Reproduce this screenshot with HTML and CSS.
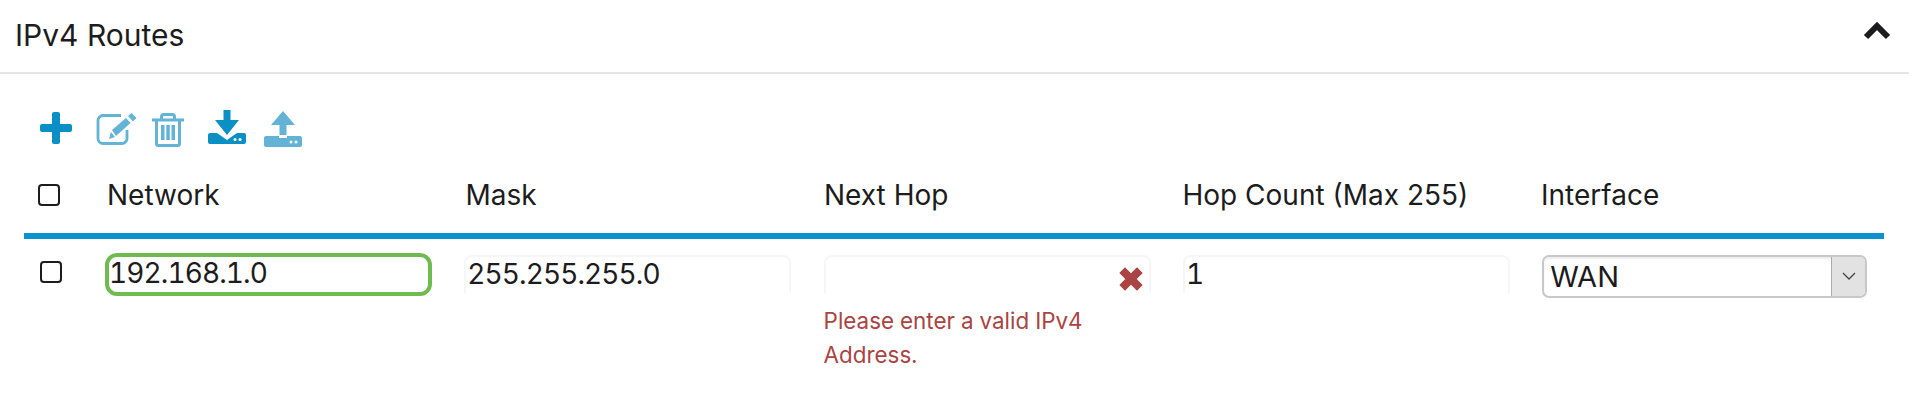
FILE: index.html
```html
<!DOCTYPE html>
<html lang="en">
<head>
    <meta charset="UTF-8">
    <meta name="viewport" content="width=device-width, initial-scale=1.0">
    <title>IPv4 Routes</title>
    <link rel="stylesheet" href="styles.css">
</head>
<body>
    <div class="panel-header">
        <h2 class="panel-title">IPv4 Routes</h2>
        <svg class="collapse-icon" width="28" height="18" viewBox="0 0 28 18">
            <path d="M3 15 L14 4 L25 15" fill="none" stroke="#1c1c1e" stroke-width="6"/>
        </svg>
    </div>

    <div class="toolbar">
        <svg class="tool-icon tool-add" width="32" height="32" viewBox="0 0 32 32">
            <path d="M12 2a2 2 0 0 1 2-2h4a2 2 0 0 1 2 2v10h10a2 2 0 0 1 2 2v4a2 2 0 0 1-2 2H20v10a2 2 0 0 1-2 2h-4a2 2 0 0 1-2-2V20H2a2 2 0 0 1-2-2v-4a2 2 0 0 1 2-2h10z" fill="#0b8fc4"/>
        </svg>
        <svg class="tool-icon tool-edit" width="41" height="32" viewBox="0 0 41 32">
            <path d="M25 2.500H7A5 5 0 0 0 2 7.500v18a5 5 0 0 0 5 5h19a5 5 0 0 0 5-5V17" fill="none" stroke="#62b3d5" stroke-width="2.800"/>
            <path d="M16 17L30 5l4.500 5L20 23z" fill="#62b3d5"/>
            <path d="M15 19l4 5-6 2z" fill="#62b3d5"/>
            <path d="M32 3l3.500-3 5 5-3.500 3.500z" fill="#62b3d5"/>
        </svg>
        <svg class="tool-icon tool-trash" width="32" height="34" viewBox="0 0 32 34">
            <path d="M0 7h32M9.500 6V4A2.500 2.500 0 0 1 12 1.500h8A2.500 2.500 0 0 1 22.500 4v2M4.500 7v23.500a2 2 0 0 0 2 2h19a2 2 0 0 0 2-2V7" fill="none" stroke="#62b3d5" stroke-width="3"/>
            <path d="M9 12h3.500v15H9zM14.300 12h3.500v15h-3.500zM19.500 12H23v15h-3.500z" fill="#62b3d5"/>
        </svg>
        <svg class="tool-icon tool-down" width="38" height="34" viewBox="0 0 38 34">
            <path d="M15.500 0h7v10H31L19 25 7 10h8.500z" fill="#0b8fc4"/>
            <path d="M2 23h7l10 7 10-7h7a2 2 0 0 1 2 2v7a2 2 0 0 1-2 2H2a2 2 0 0 1-2-2v-7a2 2 0 0 1 2-2z" fill="#0b8fc4"/>
            <circle cx="27" cy="29.500" r="1.500" fill="#fff"/>
            <circle cx="32" cy="29.500" r="1.500" fill="#fff"/>
        </svg>
        <svg class="tool-icon tool-up" width="38" height="36" viewBox="0 0 38 36">
            <path d="M19 0l12 14h-8.500v10h-7V14H7z" fill="#62b3d5"/>
            <path d="M2 25h13v2h8v-2h13a2 2 0 0 1 2 2v7a2 2 0 0 1-2 2H2a2 2 0 0 1-2-2v-7a2 2 0 0 1 2-2z" fill="#62b3d5"/>
            <circle cx="27" cy="31" r="1.500" fill="#fff"/>
            <circle cx="32" cy="31" r="1.500" fill="#fff"/>
        </svg>
    </div>

    <div class="route-grid route-head">
        <span class="check-box"></span>
        <div>Network</div>
        <div>Mask</div>
        <div>Next Hop</div>
        <div>Hop Count (Max 255)</div>
        <div>Interface</div>
    </div>

    <div class="route-grid route-row">
        <span class="check-box"></span>
        <div class="cell"><div class="field field-active">192.168.1.0</div></div>
        <div class="cell"><div class="field">255.255.255.0</div></div>
        <div class="cell">
            <div class="field">
                <svg class="error-icon" width="24" height="24" viewBox="2 2 20 20">
                    <path d="M3 7l4-4 5 5 5-5 4 4-5 5 5 5-4 4-5-5-5 5-4-4 5-5z" fill="#a94442" stroke="#a94442" stroke-width="1"/>
                </svg>
            </div>
            <div class="error-text">Please enter a valid IPv4 Address.</div>
        </div>
        <div class="cell"><div class="field">1</div></div>
        <div class="cell">
            <div class="select-box">
                <span class="select-value">WAN</span>
                <span class="select-arrow">
                    <svg width="14" height="9" viewBox="0 0 14 9"><path d="M1 1l6 6 6-6" fill="none" stroke="#444" stroke-width="1.300"/></svg>
                </span>
            </div>
        </div>
    </div>
</body>
</html>
```
FILE: styles.css
```css
body {
    margin: 0;
    height: 406px;
    overflow: hidden;
    font-family: Inter, "Liberation Sans", sans-serif;
    background-color: #FFFFFF;
    color: #1c1c20;
}

.panel-header {
    display: flex;
    justify-content: space-between;
    align-items: center;
    height: 72px;
    padding: 0 18px 0 15px;
    border-bottom: 2px solid #e6e6e6;
}

.panel-title {
    margin: 0 0 3px;
    font-size: 30px;
    font-weight: normal;
}

.collapse-icon {
    margin-bottom: 11px;
}

.toolbar {
    display: flex;
    align-items: flex-start;
    height: 37px;
    margin-top: 36px;
    padding-left: 40px;
}

.tool-add {
    margin-top: 2px;
}

.tool-edit {
    margin-top: 3px;
    margin-left: 24px;
}

.tool-trash {
    margin-top: 3px;
    margin-left: 15px;
}

.tool-down {
    margin-left: 24px;
}

.tool-up {
    margin-top: 1px;
    margin-left: 18px;
}

.route-grid {
    display: grid;
    margin-left: 24px;
    width: 1860px;
    box-sizing: border-box;
}

.route-head {
    grid-template-columns: 69px repeat(5, 358.500px);
    align-items: center;
    height: 44px;
    margin-top: 26px;
    padding: 0 0 16px 14px;
    border-bottom: 6px solid #0b93cf;
    font-size: 28px;
    box-sizing: content-box;
    width: 1846px;
}

.check-box {
    display: block;
    width: 18px;
    height: 18px;
    border: 2px solid #1c1c20;
    border-radius: 4px;
}

.route-row {
    grid-template-columns: 65px repeat(5, 359.300px);
    margin-top: 14px;
    padding-left: 16px;
    font-size: 28px;
    font-variant-numeric: tabular-nums;
}

.route-row .check-box {
    margin-top: 8px;
}

.cell {
    width: 327px;
}

.field {
    position: relative;
    box-sizing: border-box;
    height: 38px;
    margin-top: 2px;
    padding: 2px 1px 0;
    line-height: 30px;
    letter-spacing: -0.900px;
    border: 2px solid #f6f6f6;
    border-bottom: none;
    border-radius: 8px 8px 0 0;
}

.field-active {
    height: 43px;
    margin-top: 0;
    padding: 1px 0 0;
    border: 4px solid #70bb50;
    border-radius: 12px;
}

.error-icon {
    position: absolute;
    right: 6px;
    top: 10px;
}

.error-text {
    margin-top: 11px;
    width: 290px;
    font-size: 22.400px;
    line-height: 34px;
    color: #a94442;
}

.select-box {
    display: flex;
    justify-content: space-between;
    box-sizing: border-box;
    width: 325px;
    height: 43px;
    margin-top: 2px;
    border: 2px solid #c8c8c8;
    border-radius: 7px;
    overflow: hidden;
    box-shadow: inset 0 2px 2px #ececec;
}

.select-value {
    padding-left: 6px;
    font-size: 29px;
    line-height: 39px;
}

.select-arrow {
    display: flex;
    justify-content: center;
    align-items: center;
    width: 33px;
    background-color: #e2e2e2;
    border-left: 1px solid #aaa;
}
```
